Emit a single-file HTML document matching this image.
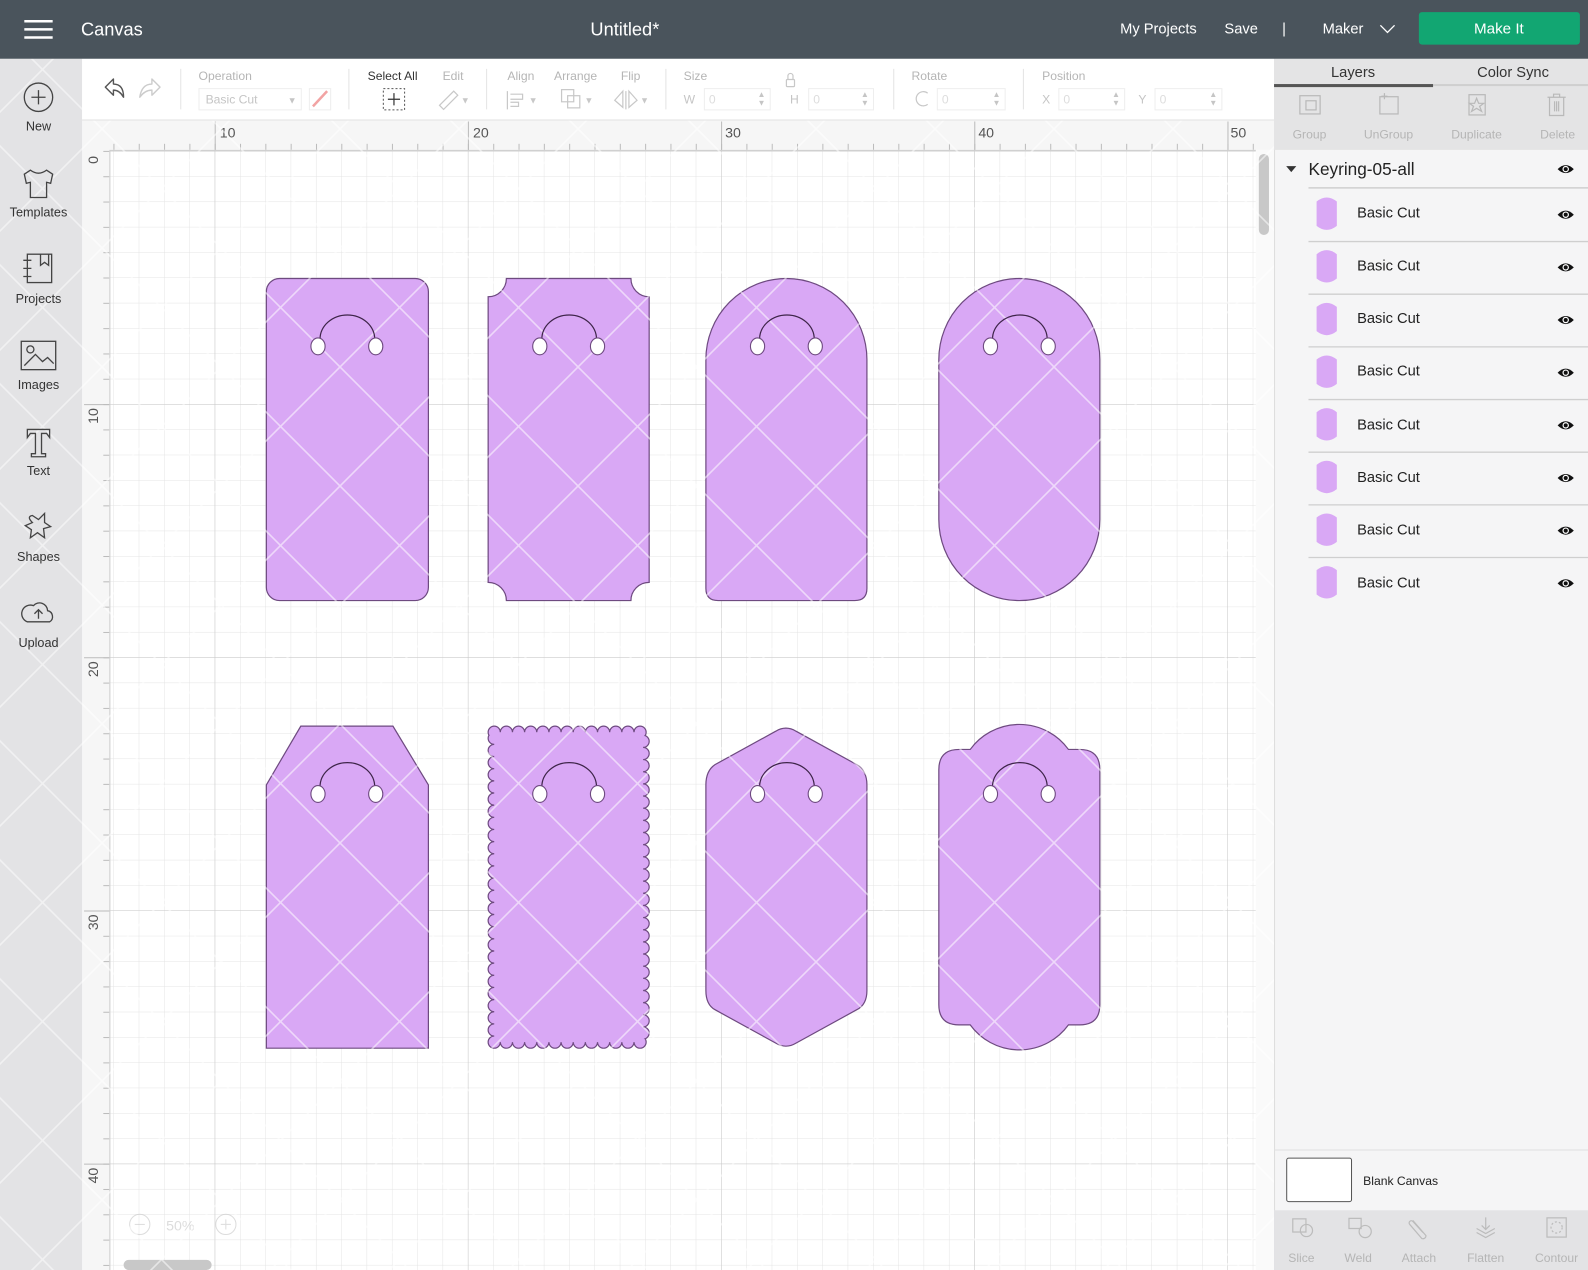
<!DOCTYPE html>
<html><head><meta charset="utf-8"><style>
html,body{margin:0;padding:0;background:#fff;}
svg{display:block;font-family:"Liberation Sans",sans-serif;}
</style></head><body>
<svg width="1588" height="1270" viewBox="0 0 1568 1254" xmlns="http://www.w3.org/2000/svg">
<defs>
<pattern id="minor" patternUnits="userSpaceOnUse" x="12" y="24" width="25" height="25"><path d="M0 0H25M0 0V25" stroke="#e4e4e4" stroke-width="1" fill="none"/></pattern>
<pattern id="major" patternUnits="userSpaceOnUse" x="212" y="149" width="250" height="250"><path d="M0 0H250M0 0V250" stroke="#c9c9c9" stroke-width="1" fill="none"/></pattern>
<pattern id="tickx" patternUnits="userSpaceOnUse" x="12" y="0" width="25" height="1254"><path d="M0.5 142V148" stroke="#bbb"/></pattern>
<pattern id="ticky" patternUnits="userSpaceOnUse" x="0" y="24" width="1568" height="25"><path d="M102 0.5H108" stroke="#bbb"/></pattern>
<pattern id="wm" patternUnits="userSpaceOnUse" x="42" y="68.6" width="117.5" height="117.5"><path d="M0 0L117.5 117.5M0 117.5L117.5 0" stroke="#fff" stroke-width="1.6" fill="none"/></pattern>
<g id="eye"><path d="M-8 0Q0 -8 8 0Q0 8 -8 0Z" fill="#111"/><circle r="3.2" fill="#fff"/><circle r="2" fill="#111"/></g>
<g id="thumb"><path d="M-10 -12Q0 -20 10 -12V12Q0 20 -10 12Z" fill="#d9a8f5"/></g>
</defs>

<!-- canvas -->
<rect x="108" y="148" width="1140" height="1106" fill="#fff"/>
<rect x="108" y="148" width="1132" height="1106" fill="url(#minor)"/>
<rect x="108" y="148" width="1132" height="1106" fill="url(#major)"/>
<rect x="1240" y="148" width="18" height="1106" fill="#fafafa"/>
<rect x="1243" y="152" width="10" height="80" rx="5" fill="#c8c8c8"/>
<rect x="122" y="1244" width="87" height="10" rx="5" fill="#c8c8c8"/>
<g opacity="0.5"><circle cx="138" cy="1209" r="10" fill="none" stroke="#bbb"/><path d="M133 1209H143" stroke="#bbb"/><text x="164" y="1215" font-size="14" fill="#bbb">50%</text><circle cx="223" cy="1209" r="10" fill="none" stroke="#bbb"/><path d="M218 1209H228M223 1204V1214" stroke="#bbb"/></g>

<!-- rulers -->
<rect x="81" y="118" width="1177" height="30" fill="#f6f6f6"/>
<rect x="81" y="118" width="27" height="1136" fill="#f6f6f6"/>
<rect x="108" y="118" width="1132" height="30" fill="url(#tickx)"/>
<rect x="81" y="148" width="27" height="1106" fill="url(#ticky)"/>
<path d="M108 148.5H1240M108.5 148V1254" stroke="#ccc"/>
<path d="M212.5 120V148M462.5 120V148M712.5 120V148M962.5 120V148M1212.5 120V148" stroke="#bbb"/>
<path d="M83 399.5H108M83 649.5H108M83 899.5H108M83 1149.5H108" stroke="#bbb"/>
<g font-size="14" fill="#555"><text x="217" y="136">10</text><text x="467" y="136">20</text><text x="716" y="136">30</text><text x="966" y="136">40</text><text x="1215" y="136">50</text></g>
<g font-size="14" fill="#555"><text transform="translate(97,154) rotate(-90)" text-anchor="end">0</text><text transform="translate(97,403) rotate(-90)" text-anchor="end">10</text><text transform="translate(97,653) rotate(-90)" text-anchor="end">20</text><text transform="translate(97,903) rotate(-90)" text-anchor="end">30</text><text transform="translate(97,1153) rotate(-90)" text-anchor="end">40</text></g>

<!-- shapes -->
<g fill="#d9a8f5" stroke="#6e4a80" stroke-width="1.2">
<rect x="263" y="275" width="160" height="318" rx="13"/>
<path d="M500 275H623A18 18 0 0 0 641 293V575A18 18 0 0 0 623 593H500A18 18 0 0 0 482 575V293A18 18 0 0 0 500 275Z"/>
<path d="M697 355A79.5 80 0 0 1 856 355V581Q856 593 844 593H709Q697 593 697 581Z"/>
<path d="M927 355A79.5 80 0 0 1 1086 355V513A79.5 80 0 0 1 927 513Z"/>
<path d="M297 717H388L423 775V1035H263V775Z"/>
<path d="M488 723H635V1029H488Z" stroke="#6e4a80" stroke-width="13.2" stroke-dasharray="0 12" stroke-linecap="round" fill="none"/>
<path d="M488 723H635V1029H488Z" stroke="#d9a8f5" stroke-width="10.8" stroke-dasharray="0 12" stroke-linecap="round" fill="none"/>
<rect x="488" y="723" width="147" height="306" stroke="none"/>
<path d="M766 722Q776 716 786 722L846 755Q856 761 856 775V978Q856 992 846 997L786 1030Q776 1036 766 1030L706 997Q697 992 697 978V775Q697 761 706 755Z"/>
<path d="M947 740H958A60 60 0 0 1 1055 740H1066Q1086 740 1086 760V992Q1086 1012 1066 1012H1055A60 60 0 0 1 958 1012H947Q927 1012 927 992V760Q927 740 947 740Z"/>
</g>
<!-- watermark on shapes area / everything below header -->
<rect x="0" y="58" width="1568" height="1196" fill="url(#wm)" opacity="0.55"/>
<g fill="none" stroke="#3d2448" stroke-width="1.2">
<path d="M316 335A27 24 0 0 1 370 335"/><path d="M535 335A27 24 0 0 1 589 335"/><path d="M750 335A27 24 0 0 1 804 335"/><path d="M980 335A27 24 0 0 1 1034 335"/>
<path d="M316 777A27 24 0 0 1 370 777"/><path d="M535 777A27 24 0 0 1 589 777"/><path d="M750 777A27 24 0 0 1 804 777"/><path d="M980 777A27 24 0 0 1 1034 777"/>
</g>
<g fill="#fff" stroke="#6e4a80" stroke-width="1.1">
<ellipse cx="314" cy="342" rx="7" ry="8.3"/><ellipse cx="371" cy="342" rx="7" ry="8.3"/><ellipse cx="533" cy="342" rx="7" ry="8.3"/><ellipse cx="590" cy="342" rx="7" ry="8.3"/><ellipse cx="748" cy="342" rx="7" ry="8.3"/><ellipse cx="805" cy="342" rx="7" ry="8.3"/><ellipse cx="978" cy="342" rx="7" ry="8.3"/><ellipse cx="1035" cy="342" rx="7" ry="8.3"/>
<ellipse cx="314" cy="784" rx="7" ry="8.3"/><ellipse cx="371" cy="784" rx="7" ry="8.3"/><ellipse cx="533" cy="784" rx="7" ry="8.3"/><ellipse cx="590" cy="784" rx="7" ry="8.3"/><ellipse cx="748" cy="784" rx="7" ry="8.3"/><ellipse cx="805" cy="784" rx="7" ry="8.3"/><ellipse cx="978" cy="784" rx="7" ry="8.3"/><ellipse cx="1035" cy="784" rx="7" ry="8.3"/>
</g>

<!-- toolbar -->
<rect x="81" y="58" width="1177" height="60" fill="#fff"/>
<path d="M81 118.5H1258" stroke="#e2e2e2"/>
<path d="M178.5 68V108M344.5 68V108M480.5 68V108M657.5 68V108M882.5 68V108M1010.5 68V108" stroke="#e4e4e4"/>
<path d="M104 86L112 78V83Q122 83 122 96Q118 89 112 89V94Z" fill="none" stroke="#555" stroke-width="1.4" stroke-linejoin="round"/>
<path d="M158 86L150 78V83Q140 83 138 96Q143 89 150 89V94Z" fill="none" stroke="#ccc" stroke-width="1.4" stroke-linejoin="round"/>
<g font-size="12" fill="#b5b5b5">
<text x="196" y="79">Operation</text><text x="437" y="79">Edit</text><text x="501" y="79">Align</text><text x="547" y="79">Arrange</text><text x="613" y="79">Flip</text><text x="675" y="79">Size</text><text x="900" y="79">Rotate</text><text x="1029" y="79">Position</text>
</g>
<text x="363" y="79" font-size="12" fill="#333">Select All</text>
<rect x="196.5" y="87.5" width="101" height="21" fill="none" stroke="#eee"/>
<text x="203" y="102" font-size="12" fill="#c5c5c5">Basic Cut</text><text x="284" y="102" font-size="9" fill="#c5c5c5">▼</text>
<rect x="305.5" y="87.5" width="21" height="21" fill="none" stroke="#eee"/><path d="M309 105L323 90" stroke="#f2a3a3" stroke-width="2.5"/>
<rect x="378.5" y="87.5" width="21" height="21" fill="none" stroke="#555" stroke-dasharray="2 2"/><path d="M389 92V104M383 98H395" stroke="#333" stroke-width="1.2"/>
<g stroke="#c8c8c8" fill="none" stroke-width="1.2">
<path d="M434 104L448 90L452 94L438 108Z"/><text x="455" y="102" font-size="9" fill="#c8c8c8" stroke="none">▼</text>
<path d="M501 90V108M504 93H516V98H504M504 101H512V105H504"/><text x="522" y="102" font-size="9" fill="#c8c8c8" stroke="none">▼</text>
<rect x="554.5" y="88.5" width="12" height="12"/><rect x="560.5" y="94.5" width="12" height="12"/><text x="577" y="102" font-size="9" fill="#c8c8c8" stroke="none">▼</text>
<path d="M618 90V108M615 90L607 99L615 106ZM621 90L629 99L621 106Z"/><text x="632" y="102" font-size="9" fill="#c8c8c8" stroke="none">▼</text>
<rect x="776.5" y="78.5" width="8" height="7" rx="1"/><path d="M778 78V75A2.5 2.5 0 0 1 783 75V78"/>
<path d="M916 92A7 7 0 1 0 916 103"/>
</g>
<g font-size="12" fill="#c5c5c5"><text x="675" y="102">W</text><text x="780" y="102">H</text><text x="1029" y="102">X</text><text x="1124" y="102">Y</text></g>
<g fill="none" stroke="#eee"><rect x="695.5" y="87.5" width="65" height="21"/><rect x="798.5" y="87.5" width="64" height="21"/><rect x="925.5" y="87.5" width="67" height="21"/><rect x="1045.5" y="87.5" width="65" height="21"/><rect x="1140.5" y="87.5" width="66" height="21"/></g>
<g font-size="12" fill="#ddd"><text x="700" y="102">0</text><text x="803" y="102">0</text><text x="930" y="102">0</text><text x="1050" y="102">0</text><text x="1145" y="102">0</text></g>
<g font-size="8" fill="#c5c5c5"><text x="748" y="96">▲</text><text x="748" y="104">▼</text><text x="850" y="96">▲</text><text x="850" y="104">▼</text><text x="980" y="96">▲</text><text x="980" y="104">▼</text><text x="1098" y="96">▲</text><text x="1098" y="104">▼</text><text x="1194" y="96">▲</text><text x="1194" y="104">▼</text></g>

<!-- left sidebar -->
<rect x="0" y="58" width="81" height="1196" fill="#e3e3e5"/>
<rect x="0" y="58" width="81" height="1196" fill="url(#wm)" opacity="0.5"/>
<g fill="none" stroke="#444" stroke-width="1.3">
<circle cx="38" cy="96" r="14"/><path d="M38 89V103M31 96H45"/>
<path d="M30 168L24 172L26 181L30 180V195H46V180L50 181L52 172L46 168Q38 174 30 168Z"/>
<rect x="27" y="251" width="24" height="28"/><path d="M40 251V262L44 259L48 262V251M23 257H31M23 265H31M23 273H31"/>
<rect x="21" y="337" width="34" height="28"/><circle cx="30" cy="345" r="3.5"/><path d="M24 361L35 350L42 357L47 353L53 359"/>
<path d="M27 424H49V432L46 428H41V448H45V451H31V448H35V428H30L27 432Z"/>
<path d="M32 509L38 513L44 507L44 516L50 520L43 522L44 531L37 526L30 531L31 523L25 519L32 516Q26 510 32 509Z"/>
<path d="M27 614H49A6 6 0 0 0 47 603A8 8 0 0 0 33 598A8 8 0 0 0 27 614ZM38 611V602M34 606L38 602L42 606"/>
</g>
<g font-size="12.5" fill="#333" text-anchor="middle">
<text x="38" y="129">New</text><text x="38" y="214">Templates</text><text x="38" y="299">Projects</text><text x="38" y="384">Images</text><text x="38" y="469">Text</text><text x="38" y="554">Shapes</text><text x="38" y="639">Upload</text>
</g>

<!-- right panel -->
<rect x="1258" y="58" width="310" height="1196" fill="#f5f5f6"/>
<path d="M1258.5 58V1254" stroke="#ddd"/>
<rect x="1258" y="58" width="310" height="90" fill="#e4e4e5"/>
<rect x="1258" y="83" width="310" height="2" fill="#cfcfcf"/>
<rect x="1258" y="83" width="157" height="3" fill="#555"/>
<g font-size="14.5" fill="#333" text-anchor="middle"><text x="1336" y="76">Layers</text><text x="1494" y="76">Color Sync</text></g>
<g fill="none" stroke="#b9b9b9" stroke-width="1.2">
<rect x="1283.5" y="94.5" width="20" height="18"/><rect x="1289.5" y="99.5" width="10" height="9"/>
<rect x="1362.5" y="95.5" width="18" height="17"/><path d="M1367 92V98M1364 95H1370"/>
<rect x="1450.5" y="93.5" width="16" height="20"/><path d="M1458 97L1460 102L1465 102L1461 105L1463 110L1458 107L1453 110L1455 105L1451 102L1456 102Z"/>
<path d="M1528 96H1546M1534 96V93H1540V96M1530 96V114H1544V96M1535 100V110M1537 100V110M1539 100V110"/>
</g>
<g font-size="12" fill="#b5b5b5" text-anchor="middle"><text x="1293" y="137">Group</text><text x="1371" y="137">UnGroup</text><text x="1458" y="137">Duplicate</text><text x="1538" y="137">Delete</text></g>
<path d="M1270 164H1280L1275 170Z" fill="#333"/>
<text x="1292" y="173" font-size="17" fill="#222">Keyring-05-all</text>
<use href="#eye" x="1546" y="167"/>
<path d="M1292 185.5H1568" stroke="#cfcfcf" stroke-width="1.5"/>
<g font-size="14.5" fill="#222">
<text x="1340" y="215">Basic Cut</text><text x="1340" y="267">Basic Cut</text><text x="1340" y="319">Basic Cut</text><text x="1340" y="371">Basic Cut</text><text x="1340" y="424">Basic Cut</text><text x="1340" y="476">Basic Cut</text><text x="1340" y="528">Basic Cut</text><text x="1340" y="580">Basic Cut</text>
</g>
<use href="#thumb" x="1310" y="211"/><use href="#thumb" x="1310" y="263"/><use href="#thumb" x="1310" y="315"/><use href="#thumb" x="1310" y="367"/><use href="#thumb" x="1310" y="419"/><use href="#thumb" x="1310" y="471"/><use href="#thumb" x="1310" y="523"/><use href="#thumb" x="1310" y="575"/>
<use href="#eye" x="1546" y="212"/><use href="#eye" x="1546" y="264"/><use href="#eye" x="1546" y="316"/><use href="#eye" x="1546" y="368"/><use href="#eye" x="1546" y="420"/><use href="#eye" x="1546" y="472"/><use href="#eye" x="1546" y="524"/><use href="#eye" x="1546" y="576"/>
<path d="M1292 238.5H1568M1292 290.5H1568M1292 342.5H1568M1292 394.5H1568M1292 446.5H1568M1292 498.5H1568M1292 550.5H1568" stroke="#cfcfcf" stroke-width="1.3"/>
<path d="M1258 1135.5H1568" stroke="#e0e0e0"/>
<rect x="1270.5" y="1143.5" width="64" height="43" rx="2" fill="#fff" stroke="#555"/>
<text x="1346" y="1170" font-size="12" fill="#222">Blank Canvas</text>
<rect x="1258" y="1195" width="310" height="59" fill="#e3e3e5"/>
<g fill="none" stroke="#bcbcbc" stroke-width="1.2">
<rect x="1276.5" y="1203.5" width="13" height="13"/><circle cx="1290" cy="1215" r="6"/>
<path d="M1332 1203H1344V1213H1332Z"/><circle cx="1348" cy="1216" r="6"/>
<path d="M1395 1205L1408 1220A3 3 0 0 1 1404 1223L1392 1209A2 2 0 0 1 1395 1206L1405 1217"/>
<path d="M1458 1213L1467 1218L1476 1213M1458 1217L1467 1222L1476 1217M1467 1202V1214M1463 1210L1467 1214L1471 1210"/>
<rect x="1527.5" y="1202.5" width="19" height="19"/><circle cx="1537" cy="1212" r="5.5" stroke-dasharray="2 2"/>
</g>
<g font-size="12" fill="#b5b5b5" text-anchor="middle"><text x="1285" y="1246">Slice</text><text x="1341" y="1246">Weld</text><text x="1401" y="1246">Attach</text><text x="1467" y="1246">Flatten</text><text x="1537" y="1246">Contour</text></g>

<!-- header -->
<rect x="0" y="0" width="1568" height="58" fill="#4a545c"/>
<path d="M24 21H52M24 29H52M24 37H52" stroke="#fff" stroke-width="2.4"/>
<text x="80" y="35" font-size="18" fill="#fff">Canvas</text>
<text x="617" y="35" font-size="18" fill="#fff" text-anchor="middle">Untitled*</text>
<g font-size="14.5" fill="#fff"><text x="1106" y="33">My Projects</text><text x="1209" y="33">Save</text><text x="1266" y="33">|</text><text x="1306" y="33">Maker</text></g>
<path d="M1363 25L1370 32L1377 25" fill="none" stroke="#fff" stroke-width="1.3"/>
<rect x="1401" y="12" width="159" height="32" rx="3" fill="#12a672"/>
<text x="1480" y="33" font-size="15" fill="#fff" text-anchor="middle">Make It</text>
</svg>
</body></html>
